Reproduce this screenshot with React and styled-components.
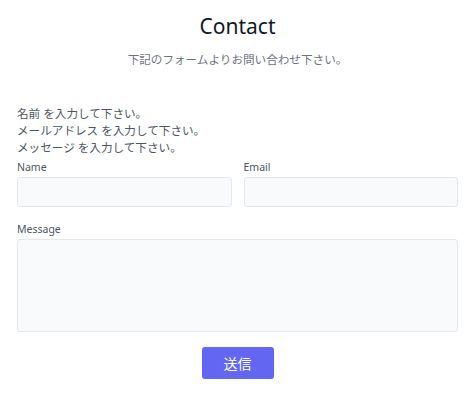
import React from "react";
import styled, { createGlobalStyle } from "styled-components";

const GlobalStyle = createGlobalStyle`
  body {
    margin: 0;
    background: #ffffff;
    font-family: "Noto Sans", "Noto Sans CJK JP", sans-serif;
  }
  * {
    box-sizing: border-box;
  }
`;

const ContactStyles = styled.section`
  padding: 12px 16px 0 17px;
  color: #4b5563;
  .heading {
    margin: 0;
    text-align: center;
    font-size: 21px;
    font-weight: 400;
    line-height: 28px;
    color: #111827;
  }
  .lead {
    margin: 10px 0 0;
    text-align: center;
    font-size: 11.6px;
    line-height: 20px;
    color: #6b7280;
  }
  .errors {
    margin: 35px 0 0;
    font-size: 11.6px;
    line-height: 17px;
    color: #4b5563;
  }
`;

const FormGrid = styled.div`
  display: grid;
  grid-template-columns: 1fr 1fr;
  column-gap: 12px;
  row-gap: 14px;
  margin-top: 3px;
`;

const Field = styled.label`
  display: flex;
  flex-direction: column;
  grid-column: ${(props) => (props.$full ? "1 / -1" : "auto")};
  font-family: "Noto Sans", sans-serif;
  font-size: 10.5px;
  line-height: 16px;
  color: #4b5563;
  span {
    margin-bottom: 2px;
  }
`;

const Input = styled.input`
  height: 30px;
  width: 100%;
  background: #f9fafb;
  border: 1px solid #e5e7eb;
  border-radius: 3px;
  outline: none;
`;

const TextArea = styled.textarea`
  height: 93px;
  width: 100%;
  resize: none;
  background: #f9fafb;
  border: 1px solid #e5e7eb;
  border-radius: 3px;
  outline: none;
`;

const Actions = styled.div`
  display: flex;
  justify-content: center;
  margin-top: 15px;
`;

const SubmitButton = styled.button`
  width: 72px;
  height: 32px;
  border: none;
  border-radius: 3px;
  background: #6366f1;
  color: #ffffff;
  font-family: "Noto Sans CJK JP", sans-serif;
  font-size: 14px;
`;

const App = () => {
  return (
    <>
      <GlobalStyle />
      <ContactStyles>
        <h1 className="heading">Contact</h1>
        <p className="lead">下記のフォームよりお問い合わせ下さい。</p>
        <p className="errors">
          名前 を入力して下さい。
          <br />
          メールアドレス を入力して下さい。
          <br />
          メッセージ を入力して下さい。
        </p>
        <FormGrid>
          <Field>
            <span>Name</span>
            <Input type="text" />
          </Field>
          <Field>
            <span>Email</span>
            <Input type="email" />
          </Field>
          <Field $full>
            <span>Message</span>
            <TextArea />
          </Field>
        </FormGrid>
        <Actions>
          <SubmitButton type="button">送信</SubmitButton>
        </Actions>
      </ContactStyles>
    </>
  );
};

export default App;
